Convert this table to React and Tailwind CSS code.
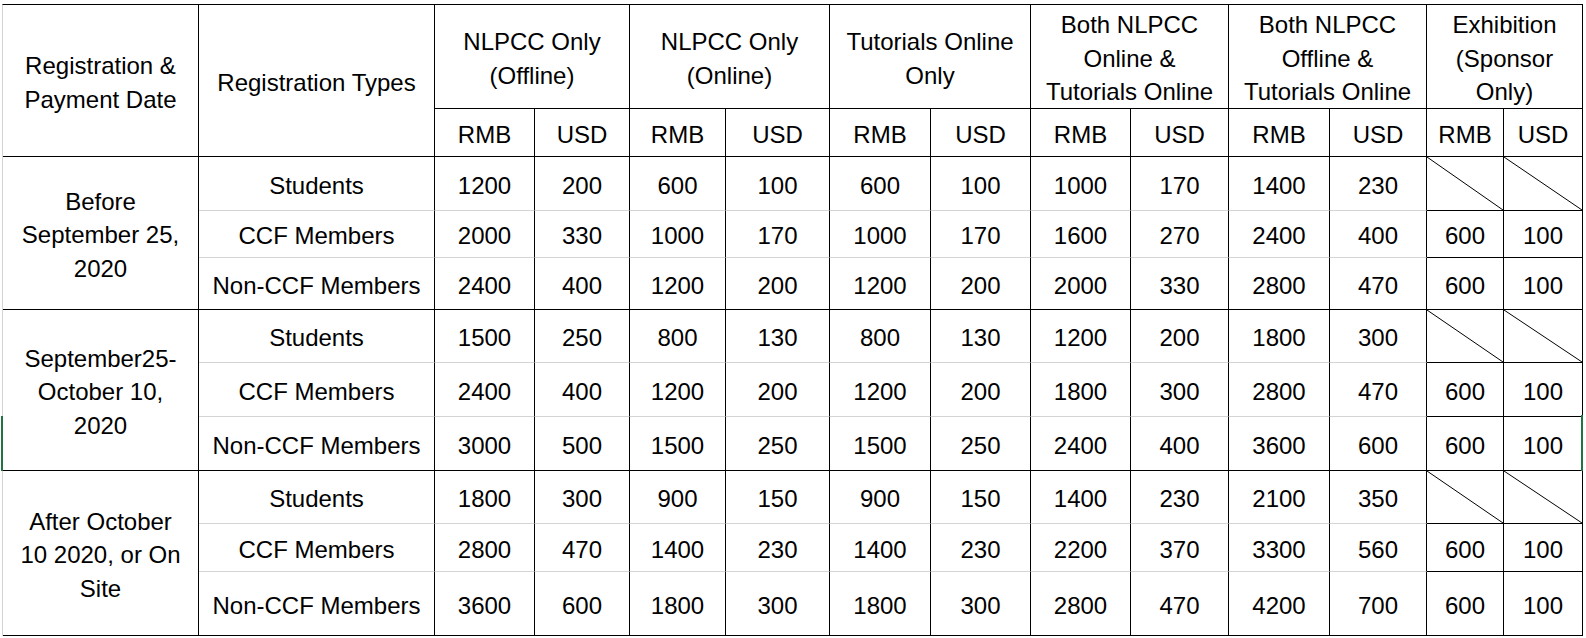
import React from "react";

const blocks = [
  {
    date: ["Before", "September 25,", "2020"],
    rows: [
      ["Students", ["1200", "200", "600", "100", "600", "100", "1000", "170", "1400", "230"], null],
      ["CCF Members", ["2000", "330", "1000", "170", "1000", "170", "1600", "270", "2400", "400"], ["600", "100"]],
      ["Non-CCF Members", ["2400", "400", "1200", "200", "1200", "200", "2000", "330", "2800", "470"], ["600", "100"]],
    ],
  },
  {
    date: ["September25-", "October 10,", "2020"],
    rows: [
      ["Students", ["1500", "250", "800", "130", "800", "130", "1200", "200", "1800", "300"], null],
      ["CCF Members", ["2400", "400", "1200", "200", "1200", "200", "1800", "300", "2800", "470"], ["600", "100"]],
      ["Non-CCF Members", ["3000", "500", "1500", "250", "1500", "250", "2400", "400", "3600", "600"], ["600", "100"]],
    ],
  },
  {
    date: ["After October", "10 2020, or On", "Site"],
    rows: [
      ["Students", ["1800", "300", "900", "150", "900", "150", "1400", "230", "2100", "350"], null],
      ["CCF Members", ["2800", "470", "1400", "230", "1400", "230", "2200", "370", "3300", "560"], ["600", "100"]],
      ["Non-CCF Members", ["3600", "600", "1800", "300", "1800", "300", "2800", "470", "4200", "700"], ["600", "100"]],
    ],
  },
];

const groups = [
  ["NLPCC Only", "(Offline)"],
  ["NLPCC Only", "(Online)"],
  ["Tutorials Online", "Only"],
  ["Both NLPCC", "Online &", "Tutorials Online"],
  ["Both NLPCC", "Offline &", "Tutorials Online"],
  ["Exhibition", "(Sponsor", "Only)"],
];

function Lines({ lines }) {
  return (
    <div className="leading-[33.5px]">
      {lines.map((l, i) => (
        <div key={i}>{l}</div>
      ))}
    </div>
  );
}

function Diag() {
  return (
    <svg className="absolute inset-0 w-full h-full" preserveAspectRatio="none">
      <line x1="0" y1="0" x2="100%" y2="100%" stroke="#000" strokeWidth="1" />
    </svg>
  );
}

export default function App() {
  return (
    <div className="relative w-[1586px] h-[638px] bg-white overflow-hidden font-['Liberation_Sans',Arial,sans-serif] text-[24px] text-black">
      <div className="pl-[2px] pt-[4px]">
        <div className="grid grid-cols-[196px_236px_100px_95px_96px_104px_101px_100px_100px_98px_101px_97px_77px_79px] grid-rows-[104px_48px_54px_47px_52px_53px_54px_54px_53px_48px_64px] border-t border-l border-t-black border-l-[#d4d4d4] w-[1581px]">
          <div className="row-span-2 flex items-center justify-center text-center pt-[4px] border-r border-b border-black">
            <Lines lines={["Registration &", "Payment Date"]} />
          </div>
          <div className="row-span-2 flex items-center justify-center text-center pt-[4px] border-r border-b border-black">
            Registration Types
          </div>
          {groups.map((g, i) => (
            <div key={i} className="col-span-2 flex items-center justify-center text-center pt-[4px] border-r border-b border-black">
              <Lines lines={g} />
            </div>
          ))}
          {groups.map((g, i) => (
            <React.Fragment key={i}>
              <div className="flex items-center justify-center pt-[4px] border-r border-b border-black">RMB</div>
              <div className="flex items-center justify-center pt-[4px] border-r border-b border-black">USD</div>
            </React.Fragment>
          ))}
          {blocks.map((b, bi) => (
            <React.Fragment key={bi}>
              {b.rows.map((r, ri) => {
                const last = ri === 2;
                const bb = last ? "border-b-black" : "border-b-[#d4d4d4]";
                return (
                  <React.Fragment key={ri}>
                    {ri === 0 && (
                      <div className="row-span-3 flex items-center justify-center text-center pt-[4px] border-r border-b border-black">
                        <Lines lines={b.date} />
                      </div>
                    )}
                    <div className={"flex items-center justify-center pt-[4px] border-r border-b border-r-black " + bb}>
                      {r[0]}
                    </div>
                    {r[1].map((v, vi) => (
                      <div key={vi} className={"flex items-center justify-center pt-[4px] border-r border-b border-r-black " + bb}>
                        {v}
                      </div>
                    ))}
                    {r[2] ? (
                      <>
                        <div className="flex items-center justify-center pt-[4px] border-r border-b border-black">{r[2][0]}</div>
                        <div className="flex items-center justify-center pt-[4px] border-r border-b border-black">{r[2][1]}</div>
                      </>
                    ) : (
                      <>
                        <div className="relative border-r border-b border-black"><Diag /></div>
                        <div className="relative border-r border-b border-black"><Diag /></div>
                      </>
                    )}
                  </React.Fragment>
                );
              })}
            </React.Fragment>
          ))}
        </div>
      </div>
      <div className="absolute left-[1px] top-[416px] w-[2px] h-[55px] bg-[#217346]" />
      <div className="absolute left-[1581px] top-[415px] w-[2px] h-[56px] bg-[#217346]" />
    </div>
  );
}
